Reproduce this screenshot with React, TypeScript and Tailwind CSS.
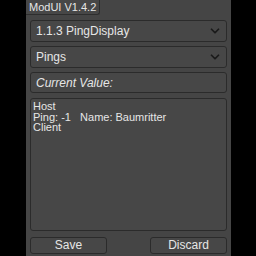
import { ChevronDown } from 'lucide-react';

export default function App() {
  return (
    <div className="w-[256px] h-[256px] bg-black flex font-['Liberation_Sans',Arial,sans-serif] text-[#e6e6e6]">
      <div className="ml-[26px] w-[205px] h-full bg-[#454545] flex flex-col">
        {/* title tab */}
        <div className="w-fit h-[15px] border-r border-b border-[#2e2e2e] rounded-br-[3px] bg-[#474747] text-[11px] leading-[15px] pl-[3px] pr-[3px] whitespace-nowrap">
          ModUI V1.4.2
        </div>

        <div className="flex flex-col px-[4px] pt-[5px] gap-[4px]">
          <div className="h-[22px] w-[197px] border border-[#2b2b2b] rounded-[3px] bg-[#474747] flex items-center justify-between pl-[5px] pr-[4px] text-[12px]">
            <span>1.1.3 PingDisplay</span>
            <ChevronDown className="w-[14px] h-[14px] text-[#1a1a1a]" strokeWidth={3} />
          </div>
          <div className="h-[22px] w-[197px] border border-[#2b2b2b] rounded-[3px] bg-[#474747] flex items-center justify-between pl-[5px] pr-[4px] text-[12px]">
            <span>Pings</span>
            <ChevronDown className="w-[14px] h-[14px] text-[#1a1a1a]" strokeWidth={3} />
          </div>
          <div className="h-[21px] w-[197px] border border-[#2b2b2b] rounded-[3px] bg-[#474747] flex items-center pl-[5px] text-[12px] italic">
            Current Value:
          </div>
          <div className="mt-[1px] h-[133px] w-[197px] border border-[#2b2b2b] rounded-[3px] bg-[#474747] pl-[2px] pt-[2px] text-[11px] leading-[10.5px] whitespace-pre">
            {'Host\nPing: -1   Name: Baumritter\nClient'}
          </div>
        </div>

        <div className="flex justify-between px-[4px] mt-[6px]">
          <button className="w-[77px] h-[17px] border border-[#2b2b2b] rounded-[3px] bg-[#474747] text-[12px] leading-[15px]">
            Save
          </button>
          <button className="w-[77px] h-[17px] border border-[#2b2b2b] rounded-[3px] bg-[#474747] text-[12px] leading-[15px]">
            Discard
          </button>
        </div>
      </div>
    </div>
  );
}
